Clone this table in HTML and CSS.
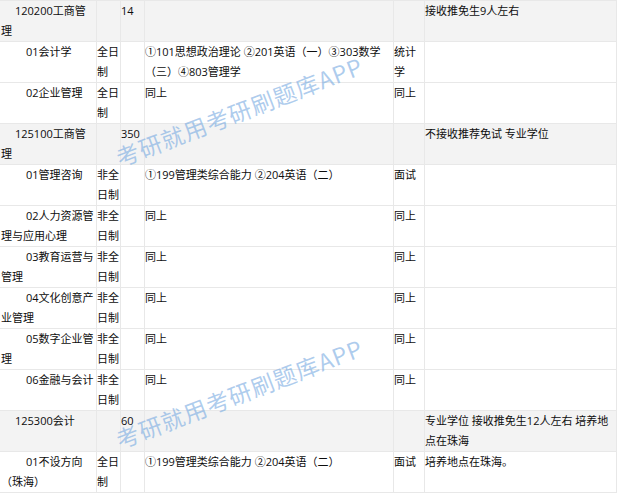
FILE: index.html
```html
<!DOCTYPE html>
<html lang="zh">
<head>
<meta charset="utf-8">
<title>招生目录</title>
<link rel="stylesheet" href="styles.css">
</head>
<body>
<div class="wrap">
  <table class="catalog">
    <colgroup>
      <col class="c1"><col class="c2"><col class="c3"><col class="c4"><col class="c5"><col class="c6">
    </colgroup>
    <tbody>
      <tr class="major">
        <td class="l1">120200工商管理</td><td></td><td>14</td><td></td><td></td><td>接收推免生9人左右</td>
      </tr>
      <tr>
        <td class="l2">01会计学</td><td>全日制</td><td></td><td>①101思想政治理论 ②201英语（一）③303数学（三）④803管理学</td><td>统计学</td><td></td>
      </tr>
      <tr>
        <td class="l2">02企业管理</td><td>全日制</td><td></td><td>同上</td><td>同上</td><td></td>
      </tr>
      <tr class="major">
        <td class="l1">125100工商管理</td><td></td><td>350</td><td></td><td></td><td>不接收推荐免试 专业学位</td>
      </tr>
      <tr>
        <td class="l2">01管理咨询</td><td>非全日制</td><td></td><td>①199管理类综合能力 ②204英语（二）</td><td>面试</td><td></td>
      </tr>
      <tr>
        <td class="l2">02人力资源管理与应用心理</td><td>非全日制</td><td></td><td>同上</td><td>同上</td><td></td>
      </tr>
      <tr>
        <td class="l2">03教育运营与管理</td><td>非全日制</td><td></td><td>同上</td><td>同上</td><td></td>
      </tr>
      <tr>
        <td class="l2">04文化创意产业管理</td><td>非全日制</td><td></td><td>同上</td><td>同上</td><td></td>
      </tr>
      <tr>
        <td class="l2">05数字企业管理</td><td>非全日制</td><td></td><td>同上</td><td>同上</td><td></td>
      </tr>
      <tr>
        <td class="l2">06金融与会计</td><td>非全日制</td><td></td><td>同上</td><td>同上</td><td></td>
      </tr>
      <tr class="major">
        <td class="l1">125300会计</td><td></td><td>60</td><td></td><td></td><td>专业学位 接收推免生12人左右 培养地点在珠海</td>
      </tr>
      <tr>
        <td class="l2">01不设方向（珠海）</td><td>全日制</td><td></td><td>①199管理类综合能力 ②204英语（二）</td><td>面试</td><td>培养地点在珠海。</td>
      </tr>
    </tbody>
  </table>
  <div class="mark mark-a">考研就用考研刷题库APP</div>
  <div class="mark mark-b">考研就用考研刷题库APP</div>
</div>
</body>
</html>
```

FILE: styles.css
```css
html, body {
  margin: 0;
  padding: 0;
  background: #fff;
}
.wrap {
  position: relative;
  width: 618px;
  height: 497px;
  overflow: hidden;
}
.catalog {
  border-collapse: collapse;
  table-layout: fixed;
  width: 617px;
  margin-left: -1px;
  font-family: "Open Sans", "Noto Sans CJK SC", sans-serif;
  font-size: 11px;
  line-height: 20px;
  color: #0d0d0d;
}
.c1 { width: 97px; }
.c2 { width: 24px; }
.c3 { width: 24px; }
.c4 { width: 249px; }
.c5 { width: 31px; }
.c6 { width: 192px; }
.catalog td {
  border: 1px solid #e8e8e8;
  padding: 0;
  height: 40px;
  vertical-align: top;
  word-break: break-all;
}
.catalog tr.major td {
  background: #f3f3f3;
}
.catalog td.l1 { text-indent: 14px; padding-left: 1px; }
.catalog td.l2 { text-indent: 25px; padding-left: 1px; }
.mark {
  position: absolute;
  font-family: "Noto Sans CJK SC", "Noto Sans", sans-serif;
  font-size: 23px;
  line-height: 24px;
  letter-spacing: 1px;
  color: rgba(120, 170, 225, 0.6);
  white-space: nowrap;
  transform: rotate(-21deg);
  transform-origin: left bottom;
  pointer-events: none;
}
.mark-a { left: 121px; top: 145px; }
.mark-b { left: 121px; top: 427px; }
```
